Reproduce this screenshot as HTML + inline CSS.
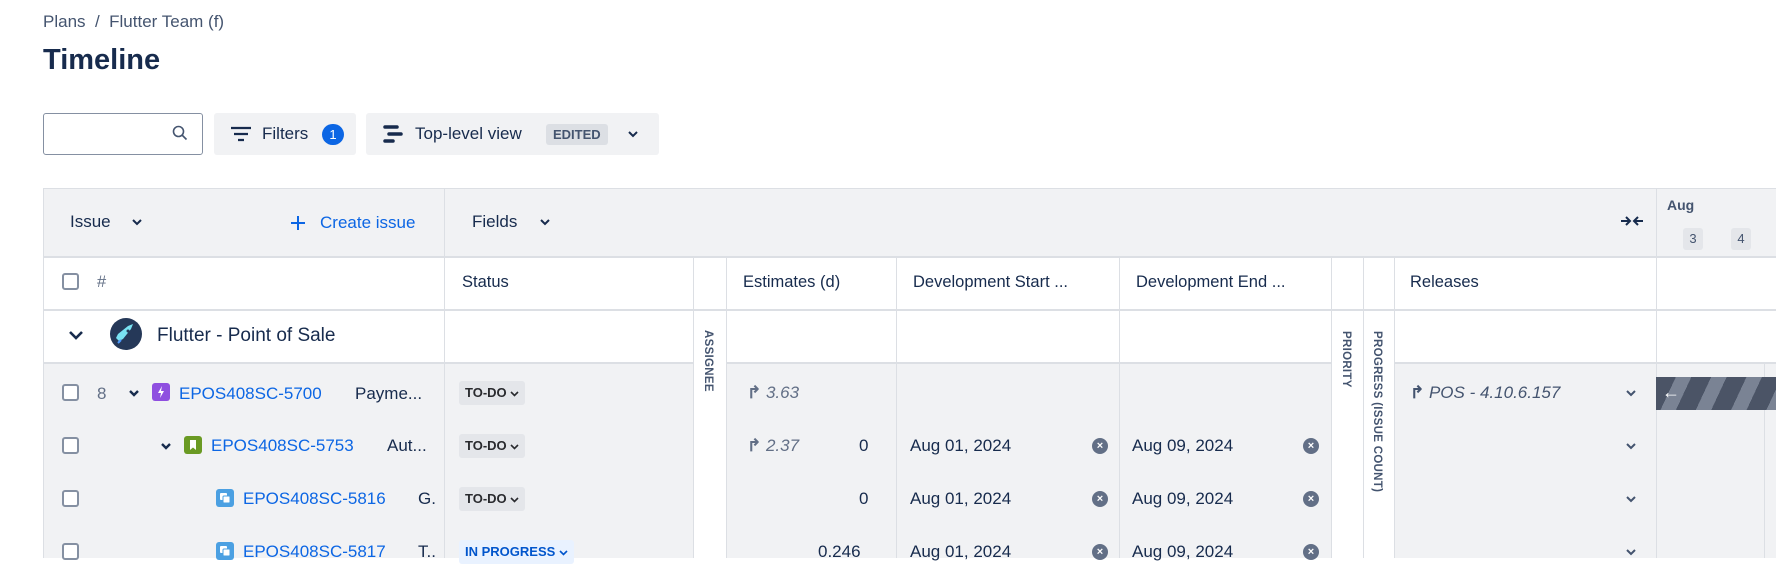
<!DOCTYPE html>
<html><head><meta charset="utf-8"><style>
*{box-sizing:border-box;margin:0;padding:0}
body{width:1776px;height:558px;overflow:hidden;background:#fff;font-family:"Liberation Sans",sans-serif;color:#172b4d;position:relative;font-size:16.5px}
.a{position:absolute;white-space:nowrap}
.vl{position:absolute;width:1px;background:#dcdfe4}
.hl{position:absolute;height:1px;background:#dcdfe4}
.cb{position:absolute;width:17px;height:17px;border:2px solid #8590a2;border-radius:3px;background:#fff}
.lnk{color:#0c66e4}
.lz{position:absolute;height:24px;background:#e4e6ea;border-radius:3px;font-size:13px;font-weight:bold;padding:0 6px;line-height:24px;color:#292a2e}
.lz svg{vertical-align:0}
.x{position:absolute;width:16px;height:16px;border-radius:50%;background:#626f86;color:#fff;font-size:11px;line-height:16px;text-align:center;font-weight:bold}
.vt{position:absolute;writing-mode:vertical-rl;font-size:11.5px;font-weight:bold;color:#44546f;letter-spacing:.3px}
.cv{position:absolute}
</style></head><body>
<div class="a" style="left:43px;top:12px;font-size:17px;color:#44546f">Plans&nbsp;&nbsp;/&nbsp;&nbsp;Flutter Team (f)</div>
<div class="a" style="left:43px;top:44px;font-size:29px;font-weight:bold;color:#172b4d">Timeline</div>

<div class="a" style="left:43px;top:113px;width:160px;height:42px;border:1px solid #8590a2;border-radius:3px"></div>
<svg class="a" style="left:171px;top:124px" width="18" height="18" viewBox="0 0 18 18"><circle cx="7.5" cy="7.5" r="5" fill="none" stroke="#44546f" stroke-width="1.6"/><path d="M11 11l4.5 4.5" stroke="#44546f" stroke-width="1.6"/></svg>

<div class="a" style="left:214px;top:113px;width:142px;height:42px;background:#f1f2f4;border-radius:3px"></div>
<svg class="a" style="left:230px;top:126px" width="22" height="17" viewBox="0 0 22 17"><path d="M1 2h20M4 8h14M8 14h6" stroke="#172b4d" stroke-width="2.2"/></svg>
<div class="a" style="left:262px;top:124px;font-size:17px">Filters</div>
<div class="a" style="left:322px;top:124px;width:22px;height:21px;border-radius:11px;background:#0c66e4;color:#fff;font-size:13px;text-align:center;line-height:21px">1</div>

<div class="a" style="left:366px;top:113px;width:293px;height:42px;background:#f1f2f4;border-radius:3px"></div>
<svg class="a" style="left:383px;top:124px" width="22" height="20" viewBox="0 0 22 20"><path d="M2 3h12M6 10h12M2 17h8" stroke="#172b4d" stroke-width="3.5" stroke-linecap="round"/></svg>
<div class="a" style="left:415px;top:124px;font-size:17px">Top-level view</div>
<div class="a" style="left:546px;top:124px;height:21px;padding:0 7px;background:#dcdfe4;border-radius:3px;font-size:13px;font-weight:bold;color:#44546f;line-height:21px">EDITED</div>
<svg class="cv" style="left:627px;top:130px" width="12" height="8" viewBox="0 0 12 8"><path d="M2 2l4 4 4-4" stroke="#172b4d" stroke-width="2" fill="none"/></svg>

<!-- table -->
<div class="a" style="left:43px;top:188px;width:1733px;height:68px;background:#f1f2f4;border-top:1px solid #dcdfe4;border-left:1px solid #dcdfe4"></div>
<div class="a" style="left:43px;top:362px;width:1733px;height:196px;background:#f1f2f4"></div>
<div class="vl" style="left:43px;top:188px;height:370px"></div>
<div class="hl" style="left:43px;top:256px;width:1733px;height:2px"></div>
<div class="hl" style="left:43px;top:309px;width:1733px;height:2px"></div>
<div class="hl" style="left:43px;top:362px;width:1733px;height:2px"></div>
<div class="vl" style="left:444px;top:188px;height:370px"></div>
<div class="vl" style="left:693px;top:256px;height:302px"></div>
<div class="vl" style="left:726px;top:256px;height:302px"></div>
<div class="vl" style="left:896px;top:256px;height:302px"></div>
<div class="vl" style="left:1119px;top:256px;height:302px"></div>
<div class="vl" style="left:1331px;top:256px;height:302px"></div>
<div class="vl" style="left:1363px;top:256px;height:302px"></div>
<div class="vl" style="left:1394px;top:256px;height:302px"></div>
<div class="vl" style="left:1656px;top:188px;height:370px"></div>
<div class="vl" style="left:1764px;top:362px;height:196px"></div>
<div class="a" style="left:694px;top:311px;width:32px;height:247px;background:#fff"></div>
<div class="a" style="left:1332px;top:311px;width:62px;height:247px;background:#fff"></div>
<div class="vl" style="left:1363px;top:311px;height:247px"></div>

<div class="a" style="left:70px;top:212px;font-size:17px">Issue</div>
<svg class="cv" style="left:131px;top:218px" width="12" height="8" viewBox="0 0 12 8"><path d="M2 2l4 4 4-4" stroke="#172b4d" stroke-width="2" fill="none"/></svg>
<svg class="cv" style="left:290px;top:215px" width="16" height="16" viewBox="0 0 16 16"><path d="M8 1v14M1 8h14" stroke="#0c66e4" stroke-width="2"/></svg>
<div class="a lnk" style="left:320px;top:213px;font-size:17px">Create issue</div>
<div class="a" style="left:472px;top:212px;font-size:17px">Fields</div>
<svg class="cv" style="left:539px;top:218px" width="12" height="8" viewBox="0 0 12 8"><path d="M2 2l4 4 4-4" stroke="#172b4d" stroke-width="2" fill="none"/></svg>
<svg class="a" style="left:1620px;top:214px" width="24" height="14" viewBox="0 0 24 14"><path d="M1 7h8M6 3l4 4-4 4M23 7h-8M18 3l-4 4 4 4" stroke="#172b4d" stroke-width="2" fill="none"/></svg>
<div class="a" style="left:1667px;top:197px;font-size:14px;font-weight:bold;color:#44546f">Aug</div>
<div class="a" style="left:1683px;top:228px;width:20px;height:22px;background:#e4e6ea;border-radius:3px;font-size:13px;color:#44546f;text-align:center;line-height:22px">3</div>
<div class="a" style="left:1731px;top:228px;width:20px;height:22px;background:#e4e6ea;border-radius:3px;font-size:13px;color:#44546f;text-align:center;line-height:22px">4</div>

<div class="cb" style="left:62px;top:273px"></div>
<div class="a" style="left:97px;top:273px;color:#626f86">#</div>
<div class="a" style="left:462px;top:273px">Status</div>
<div class="a" style="left:743px;top:273px">Estimates (d)</div>
<div class="a" style="left:913px;top:273px">Development Start ...</div>
<div class="a" style="left:1136px;top:273px">Development End ...</div>
<div class="a" style="left:1410px;top:273px">Releases</div>

<svg class="cv" style="left:68px;top:330px" width="16" height="10" viewBox="0 0 16 10"><path d="M2 2l6 6 6-6" stroke="#172b4d" stroke-width="2.6" fill="none"/></svg>
<svg class="a" style="left:110px;top:318px" width="32" height="32" viewBox="0 0 32 32"><circle cx="16" cy="16" r="16" fill="#253858"/><path d="M9 23l4-2 8-10 2-5-5 2-10 8-2 4z" fill="#79e2f2"/><path d="M8 25l3-3" stroke="#4c9aff" stroke-width="2"/><circle cx="18" cy="13" r="1.5" fill="#253858"/></svg>
<div class="a" style="left:157px;top:325px;font-size:19px">Flutter - Point of Sale</div>
<div class="vt" style="left:702px;top:330px">ASSIGNEE</div>
<div class="vt" style="left:1340px;top:331px">PRIORITY</div>
<div class="vt" style="left:1371px;top:331px">PROGRESS (ISSUE COUNT)</div>

<!-- row 1 -->
<div class="cb" style="left:62px;top:384px"></div>
<div class="a" style="left:97px;top:384px;color:#626f86;font-size:17px">8</div>
<svg class="cv" style="left:128px;top:389px" width="12" height="8" viewBox="0 0 12 8"><path d="M2 2l4 4 4-4" stroke="#172b4d" stroke-width="2.4" fill="none"/></svg>
<div class="a" style="left:152px;top:383px;width:18px;height:18px;border-radius:3px;background:#8f4fe0"></div>
<svg class="a" style="left:152px;top:383px" width="18" height="18" viewBox="0 0 18 18"><path d="M10 3l-4 7h3l-1 5 4-7h-3z" fill="#fff"/></svg>
<div class="a lnk" style="left:179px;top:384px;font-size:17px">EPOS408SC-5700</div>
<div class="a" style="left:355px;top:384px;font-size:17px">Payme...</div>
<div class="lz" style="left:459px;top:381px">TO-DO <svg width="9" height="6" viewBox="0 0 9 6"><path d="M1 1l3.5 3.5L8 1" stroke="#292a2e" stroke-width="1.6" fill="none"/></svg></div>
<div class="a" style="left:747px;top:383px;font-size:17px;color:#626f86;font-style:italic"><b style="font-style:normal">↱</b> 3.63</div>
<div class="a" style="left:1410px;top:383px;font-size:17px;color:#44546f;font-style:italic"><b style="font-style:normal">↱</b> POS - 4.10.6.157</div>
<svg class="cv" style="left:1625px;top:389px" width="12" height="8" viewBox="0 0 12 8"><path d="M2 2l4 4 4-4" stroke="#44546f" stroke-width="2" fill="none"/></svg>
<div class="a" style="left:1656px;top:377px;width:120px;height:33px;background:repeating-linear-gradient(115deg,#4b5466 0 18px,#7a8394 18px 32px)"></div>
<div class="a" style="left:1662px;top:382px;color:#fff;font-weight:bold;font-size:18px">←</div>

<!-- row 2 -->
<div class="cb" style="left:62px;top:437px"></div>
<svg class="cv" style="left:160px;top:442px" width="12" height="8" viewBox="0 0 12 8"><path d="M2 2l4 4 4-4" stroke="#172b4d" stroke-width="2.4" fill="none"/></svg>
<div class="a" style="left:184px;top:436px;width:18px;height:18px;border-radius:3px;background:#6a9a23"></div>
<svg class="a" style="left:184px;top:436px" width="18" height="18" viewBox="0 0 18 18"><path d="M6 4h6v10l-3-2.5L6 14z" fill="#fff"/></svg>
<div class="a lnk" style="left:211px;top:436px;font-size:17px">EPOS408SC-5753</div>
<div class="a" style="left:387px;top:436px;font-size:17px">Aut...</div>
<div class="lz" style="left:459px;top:434px">TO-DO <svg width="9" height="6" viewBox="0 0 9 6"><path d="M1 1l3.5 3.5L8 1" stroke="#292a2e" stroke-width="1.6" fill="none"/></svg></div>
<div class="a" style="left:747px;top:436px;font-size:17px;color:#626f86;font-style:italic"><b style="font-style:normal">↱</b> 2.37</div>
<div class="a" style="left:859px;top:436px;font-size:17px">0</div>
<div class="a" style="left:910px;top:436px;font-size:17px">Aug 01, 2024</div>
<div class="x" style="left:1092px;top:438px">×</div>
<div class="a" style="left:1132px;top:436px;font-size:17px">Aug 09, 2024</div>
<div class="x" style="left:1303px;top:438px">×</div>
<svg class="cv" style="left:1625px;top:442px" width="12" height="8" viewBox="0 0 12 8"><path d="M2 2l4 4 4-4" stroke="#44546f" stroke-width="2" fill="none"/></svg>

<!-- row 3 -->
<div class="cb" style="left:62px;top:490px"></div>
<div class="a" style="left:216px;top:489px;width:18px;height:18px;border-radius:3px;background:#4ba0e2"></div>
<svg class="a" style="left:216px;top:489px" width="18" height="18" viewBox="0 0 18 18"><rect x="4" y="4" width="7" height="7" rx="1" fill="#fff"/><rect x="7" y="7" width="7" height="7" rx="1" fill="#fff" stroke="#4ba0e2"/></svg>
<div class="a lnk" style="left:243px;top:489px;font-size:17px">EPOS408SC-5816</div>
<div class="a" style="left:418px;top:489px;font-size:17px">G.</div>
<div class="lz" style="left:459px;top:487px">TO-DO <svg width="9" height="6" viewBox="0 0 9 6"><path d="M1 1l3.5 3.5L8 1" stroke="#292a2e" stroke-width="1.6" fill="none"/></svg></div>
<div class="a" style="left:859px;top:489px;font-size:17px">0</div>
<div class="a" style="left:910px;top:489px;font-size:17px">Aug 01, 2024</div>
<div class="x" style="left:1092px;top:491px">×</div>
<div class="a" style="left:1132px;top:489px;font-size:17px">Aug 09, 2024</div>
<div class="x" style="left:1303px;top:491px">×</div>
<svg class="cv" style="left:1625px;top:495px" width="12" height="8" viewBox="0 0 12 8"><path d="M2 2l4 4 4-4" stroke="#44546f" stroke-width="2" fill="none"/></svg>

<!-- row 4 -->
<div class="cb" style="left:62px;top:543px"></div>
<div class="a" style="left:216px;top:542px;width:18px;height:18px;border-radius:3px;background:#4ba0e2"></div>
<svg class="a" style="left:216px;top:542px" width="18" height="18" viewBox="0 0 18 18"><rect x="4" y="4" width="7" height="7" rx="1" fill="#fff"/><rect x="7" y="7" width="7" height="7" rx="1" fill="#fff" stroke="#4ba0e2"/></svg>
<div class="a lnk" style="left:243px;top:542px;font-size:17px">EPOS408SC-5817</div>
<div class="a" style="left:418px;top:542px;font-size:17px">T..</div>
<div class="lz" style="left:459px;top:540px;background:#e9f2ff;color:#0055cc">IN PROGRESS <svg width="9" height="6" viewBox="0 0 9 6"><path d="M1 1l3.5 3.5L8 1" stroke="#0055cc" stroke-width="1.6" fill="none"/></svg></div>
<div class="a" style="left:818px;top:542px;font-size:17px">0.246</div>
<div class="a" style="left:910px;top:542px;font-size:17px">Aug 01, 2024</div>
<div class="x" style="left:1092px;top:544px">×</div>
<div class="a" style="left:1132px;top:542px;font-size:17px">Aug 09, 2024</div>
<div class="x" style="left:1303px;top:544px">×</div>
<svg class="cv" style="left:1625px;top:548px" width="12" height="8" viewBox="0 0 12 8"><path d="M2 2l4 4 4-4" stroke="#44546f" stroke-width="2" fill="none"/></svg>
</body></html>
